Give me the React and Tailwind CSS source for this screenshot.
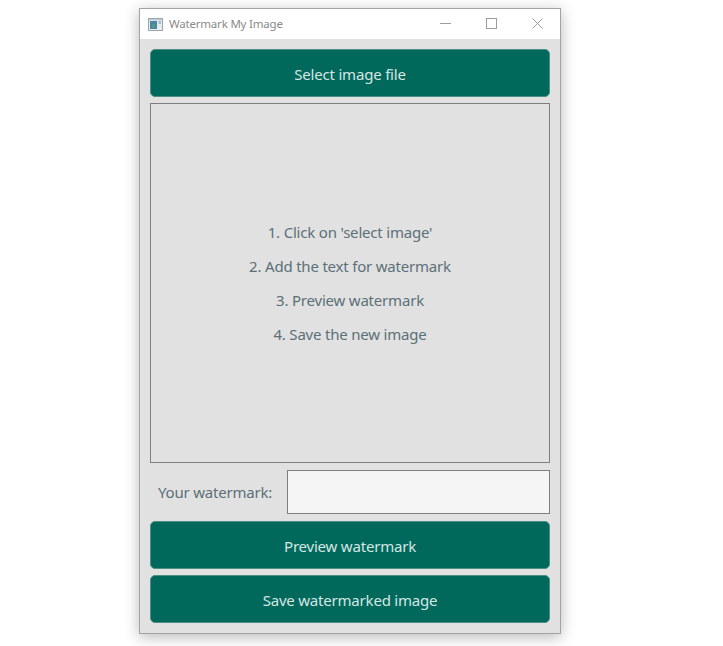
import React from "react";

const font = "font-['Noto_Sans','Open_Sans',sans-serif]";

const steps = [
  "1. Click on 'select image'",
  "2. Add the text for watermark",
  "3. Preview watermark",
  "4. Save the new image",
];

const GreenButton = ({ label }) => (
  <button className="w-full h-[48px] shrink-0 pt-[2px] rounded-[5px] border border-[#4d8f85] bg-[#00695c] text-[15px] tracking-[-0.2px] text-[#d6e6e3]">
    {label}
  </button>
);

const AppIcon = () => (
  <svg width="15" height="15" viewBox="0 0 15 15">
    <rect x="0.5" y="1.5" width="14" height="12" fill="#e8ecef" stroke="#9aa5ae" />
    <rect x="1" y="2" width="13" height="1.5" fill="#c3ccd3" />
    <rect x="2" y="4" width="7" height="8" fill="#4b87a3" />
    <rect x="4" y="7" width="3" height="4" fill="#4f9a80" />
    <rect x="10.5" y="4" width="2.5" height="3" fill="#a8c0d2" />
  </svg>
);

const App = () => {
  return (
    <div className={`min-h-[646px] bg-white pt-2 pl-[139px] ${font}`}>
      <div className="w-[422px] h-[626px] flex flex-col border border-[#a3a3a3] bg-[#e1e1e1] shadow-[0_3px_14px_rgba(0,0,0,0.28)]">
        {/* Title bar */}
        <div className="h-[30px] shrink-0 flex items-center bg-white pl-[8px]">
          <AppIcon />
          <span className="ml-[6px] text-[11.5px] tracking-[-0.2px] text-[#8a8a8a]">Watermark My Image</span>
          <div className="ml-auto flex items-center pb-[1px] text-[#a39a98]">
            <div className="w-[46px] flex justify-center">
              <svg width="11" height="11" viewBox="0 0 11 11">
                <path d="M0 5.5H11" stroke="currentColor" strokeWidth="1" />
              </svg>
            </div>
            <div className="w-[46px] flex justify-center">
              <svg width="11" height="11" viewBox="0 0 11 11">
                <rect x="0.5" y="0.5" width="10" height="10" fill="none" stroke="currentColor" strokeWidth="1" />
              </svg>
            </div>
            <div className="w-[46px] flex justify-center">
              <svg width="11" height="11" viewBox="0 0 11 11">
                <path d="M0.5 0.5L10.5 10.5M10.5 0.5L0.5 10.5" stroke="currentColor" strokeWidth="1" />
              </svg>
            </div>
          </div>
        </div>

        {/* Content */}
        <div className="flex-1 flex flex-col px-[10px] pt-[10px]">
          <GreenButton label="Select image file" />

          <div className="mt-[6px] h-[360px] shrink-0 flex flex-col items-center justify-center gap-[11px] border border-[#7f7f7f] text-[15px] tracking-[-0.2px] leading-[23px] text-[#5c7078]">
            {steps.map((step) => (
              <div key={step}>{step}</div>
            ))}
          </div>

          <div className="mt-[7px] h-[44px] shrink-0 flex items-center">
            <label className="w-[137px] shrink-0 pl-[8px] text-[15px] tracking-[-0.2px] text-[#5c7078]">Your watermark:</label>
            <input className="flex-1 h-full min-w-0 border border-[#7f7f7f] bg-[#f5f5f5] outline-none" />
          </div>

          <div className="mt-[7px]">
            <GreenButton label="Preview watermark" />
          </div>
          <div className="mt-[6px]">
            <GreenButton label="Save watermarked image" />
          </div>
        </div>
      </div>
    </div>
  );
};

export default App;
